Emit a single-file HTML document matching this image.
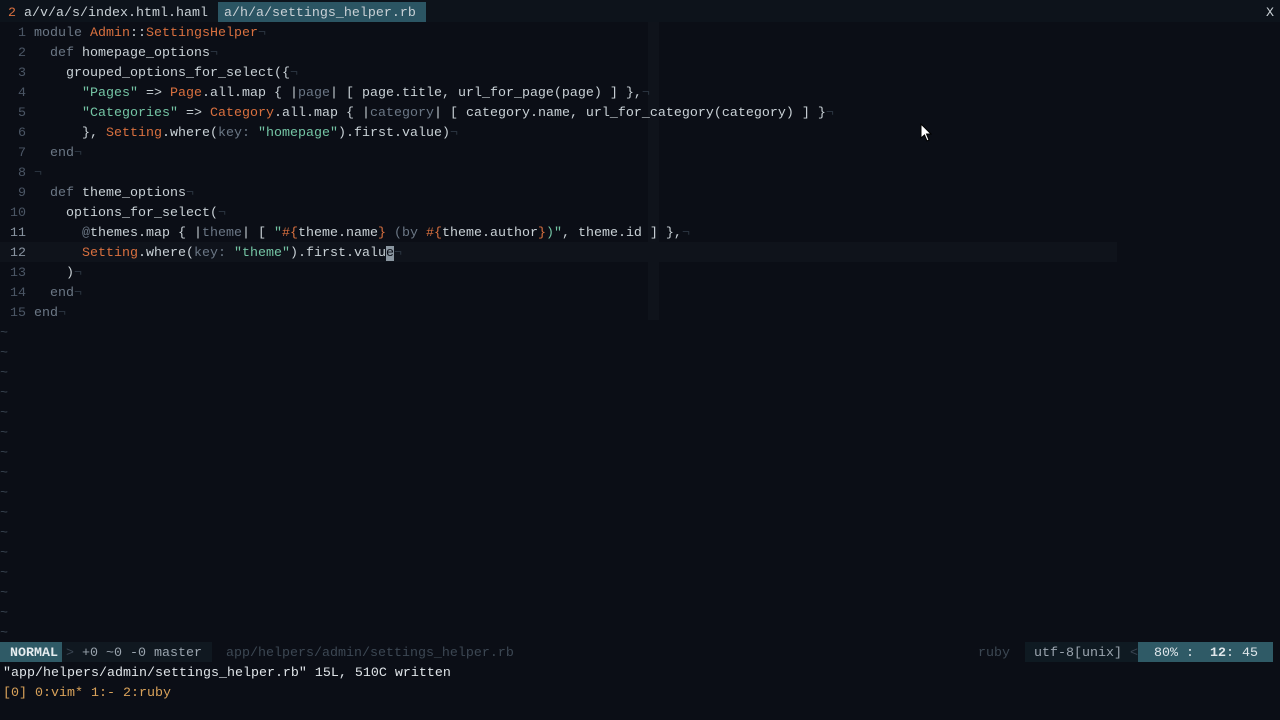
<!DOCTYPE html>
<html><head><meta charset="utf-8"><style>
html,body{margin:0;padding:0;background:#0b0e16;width:1280px;height:720px;overflow:hidden}
body{font-family:"Liberation Mono",monospace;font-size:13.33px;color:#c9d1d6;position:relative}
.row{position:absolute;left:2px;height:20px;line-height:20px;white-space:pre;margin-top:2px}
.ln{color:#4b5665}.k{color:#6b7785}.c{color:#d9703f}.s{color:#74c4a4}.p{color:#2e3844}.d{color:#3a4552}
.cc{position:absolute;left:648px;top:22px;width:11px;height:298px;background:#0f131b}
.cl{position:absolute;left:0;top:242px;width:1117px;height:20px;background:#0f131b}
.bar{position:absolute;height:20px;top:642px}
</style></head><body>
<div style="position:absolute;left:0;top:0;width:1280px;height:22px;background:#0d131b"></div>
<div class="cc"></div><div class="cl"></div>
<div style="position:absolute;left:218px;top:2px;width:208px;height:20px;background:#2b5563"></div>
<div class="row" style="top:2px;left:0"><span class="c"> 2</span> a/v/a/s/index.html.haml  a/h/a/settings_helper.rb</div>
<div class="row" style="top:2px;left:1266px">X</div>
<div class="row" style="top:22px"><span class="ln">  1 </span><span class="k">module</span> <span class="c">Admin</span>::<span class="c">SettingsHelper</span><span class="p">¬</span></div>
<div class="row" style="top:42px"><span class="ln">  2 </span>  <span class="k">def</span> homepage_options<span class="p">¬</span></div>
<div class="row" style="top:62px"><span class="ln">  3 </span>    grouped_options_for_select({<span class="p">¬</span></div>
<div class="row" style="top:82px"><span class="ln">  4 </span>      <span class="s">"Pages"</span> =&gt; <span class="c">Page</span>.all.map { |<span class="k">page</span>| [ page.title, url_for_page(page) ] },<span class="p">¬</span></div>
<div class="row" style="top:102px"><span class="ln">  5 </span>      <span class="s">"Categories"</span> =&gt; <span class="c">Category</span>.all.map { |<span class="k">category</span>| [ category.name, url_for_category(category) ] }<span class="p">¬</span></div>
<div class="row" style="top:122px"><span class="ln">  6 </span>      }, <span class="c">Setting</span>.where(<span class="k">key:</span> <span class="s">"homepage"</span>).first.value)<span class="p">¬</span></div>
<div class="row" style="top:142px"><span class="ln">  7 </span>  <span class="k">end</span><span class="p">¬</span></div>
<div class="row" style="top:162px"><span class="ln">  8 </span><span class="p">¬</span></div>
<div class="row" style="top:182px"><span class="ln">  9 </span>  <span class="k">def</span> theme_options<span class="p">¬</span></div>
<div class="row" style="top:202px"><span class="ln"> 10 </span>    options_for_select(<span class="p">¬</span></div>
<div class="row" style="top:222px"><span style="color:#8893a0"> 11 </span>      <span class="k">@</span>themes.map { |<span class="k">theme</span>| [ <span class="s">"</span><span class="c">#{</span>theme.name<span class="c">}</span><span class="k"> (by </span><span class="c">#{</span>theme.author<span class="c">}</span><span class="s">)"</span>, theme.id ] },<span class="p">¬</span></div>
<div class="row" style="top:242px"><span style="color:#8893a0"> 12 </span>      <span class="c">Setting</span>.where(<span class="k">key:</span> <span class="s">"theme"</span>).first.valu<span style="background:#8a96a0;color:#0b0e16">e</span><span class="p">¬</span></div>
<div class="row" style="top:262px"><span class="ln"> 13 </span>    )<span class="p">¬</span></div>
<div class="row" style="top:282px"><span class="ln"> 14 </span>  <span class="k">end</span><span class="p">¬</span></div>
<div class="row" style="top:302px"><span class="ln"> 15 </span><span class="k">end</span><span class="p">¬</span></div>
<div class="row d" style="left:0;top:322px">~
~
~
~
~
~
~
~
~
~
~
~
~
~
~
~</div>
<div class="bar" style="left:0;width:62px;background:#2f5a66"></div>
<div class="bar" style="left:62px;width:150px;background:#101820"></div>
<div class="bar" style="left:1025px;width:113px;background:#0f1a22"></div>
<div class="bar" style="left:1138px;width:135px;background:#2f5a66"></div>
<div class="row" style="left:10px;top:642px;font-weight:bold;color:#e6ecef">NORMAL</div>
<div class="row" style="left:66px;top:642px"><span class="d">&gt;</span> <span style="color:#9aa4ae">+0 ~0 -0 master</span>   <span style="color:#3c4753">app/helpers/admin/settings_helper.rb</span></div>
<div class="row" style="left:978px;top:642px;color:#3c4753">ruby</div>
<div class="row" style="left:1034px;top:642px;color:#9aa4ae">utf-8[unix] <span class="d">&lt;</span></div>
<div class="row" style="left:1154px;top:642px;color:#dfe6ea">80% :  <b>12</b>: 45</div>
<div class="row" style="left:3px;top:662px;color:#dfe4e8">"app/helpers/admin/settings_helper.rb" 15L, 510C written</div>
<div class="row" style="left:3px;top:682px;color:#d9a25a">[0] 0:vim* 1:- 2:ruby</div>
<svg style="position:absolute;left:920px;top:123px" width="12" height="19" viewBox="0 0 12 19"><path d="M1 1 L1 15 L4.5 12 L7 18 L9 17 L6.5 11 L11 11 Z" fill="#fff" stroke="#000" stroke-width="1"/></svg>
</body></html>
